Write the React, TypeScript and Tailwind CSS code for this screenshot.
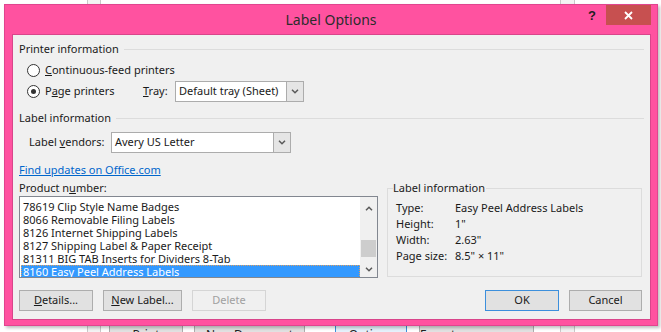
import React from "react";

const ui = "font-['Noto_Sans',sans-serif] text-[11px] text-[#1a1a1a]";

function Chevron({ up = false }: { up?: boolean }) {
  return (
    <svg width="8" height="5" viewBox="0 0 8 5" className="block">
      <path
        d={up ? "M1 4.2 L4 1.2 L7 4.2" : "M1 0.8 L4 3.8 L7 0.8"}
        fill="none"
        stroke="#5a5a5a"
        strokeWidth="1.5"
      />
    </svg>
  );
}

function Radio({ checked = false }: { checked?: boolean }) {
  return (
    <span className="w-[13px] h-[13px] rounded-full border border-[#333] bg-white flex items-center justify-center shrink-0">
      {checked && <span className="w-[5px] h-[5px] rounded-full bg-[#333]" />}
    </span>
  );
}

function Combo({ value, width }: { value: string; width: string }) {
  return (
    <div className={`flex h-[21px] border border-[#acacac] bg-white ${width}`}>
      <span className="flex-1 pl-[3px] flex items-center">{value}</span>
      <span className="w-[17px] bg-[#e5e5e5] border-l border-[#acacac] flex items-center justify-center">
        <Chevron />
      </span>
    </div>
  );
}

function Btn({ children, className = "" }: { children: React.ReactNode; className?: string }) {
  return (
    <div
      className={`h-[21px] flex items-center justify-center border ${className}`}
    >
      {children}
    </div>
  );
}

const products = [
  "78619 Clip Style Name Badges",
  "8066 Removable Filing Labels",
  "8126 Internet Shipping Labels",
  "8127 Shipping Label & Paper Receipt",
  "81311 BIG TAB Inserts for Dividers 8-Tab",
  "8160 Easy Peel Address Labels",
];

const info: [string, string][] = [
  ["Type:", "Easy Peel Address Labels"],
  ["Height:", "1\""],
  ["Width:", "2.63\""],
  ["Page size:", "8.5\" \u00d7 11\""],
];

export default function App() {
  return (
    <div className={`relative w-[661px] h-[332px] overflow-hidden bg-white ${ui}`}>
      {/* background window behind the dialog */}
      <div className="flex h-full">
        <div className="w-[87px]" />
        <div className="w-[14px] border-l border-r border-[#c9c9c9] bg-[#f3f3f3]" />
        <div className="flex-1 flex flex-col">
          <div className="mt-[325px] flex text-[12px] leading-[14px] font-['Noto_Sans',sans-serif] text-[#222]">
            <div className="ml-[8px] w-[74px] h-[22px] border border-[#adadad] bg-[#e1e1e1] flex justify-center pt-[2px]">Print</div>
            <div className="ml-[11px] w-[111px] h-[22px] border border-[#adadad] bg-[#e1e1e1] flex justify-center pt-[2px]">New Document</div>
            <div className="ml-[30px] w-[72px] h-[22px] border border-[#3c8fdc] bg-[#e5f1fb] flex justify-center pt-[2px]">Options</div>
            <div className="ml-[12px] w-[115px] h-[22px] border border-[#adadad] bg-[#e1e1e1] flex justify-center pt-[2px]">E-postage Properties</div>
          </div>
        </div>
        <div className="w-[15px] border-l border-r border-[#c9c9c9] bg-[#f3f3f3]" />
        <div className="w-[86px]" />
      </div>

      {/* Label Options dialog */}
      <div className="absolute left-[4px] top-[4px] w-[654px] h-[322px] bg-[#ff52a0] border border-[#e0458f] shadow-[2px_2px_3px_rgba(0,0,0,0.25)] flex flex-col">
        <div className="h-[29px] grid grid-cols-[1fr_auto_1fr]">
          <div />
          <div className="text-[14px] text-[#2c2c2c] pt-[4px] font-['Noto_Sans',sans-serif]">Label Options</div>
          <div className="flex justify-end items-start pr-[6px]">
            <span className="mt-[1px] mr-[10px] text-[13px] font-bold text-[#1e1e1e] font-['Liberation_Sans',sans-serif]">?</span>
            <span className="w-[45px] h-[20px] bg-[#c75050] flex items-center justify-center">
              <svg width="9" height="9" viewBox="0 0 9 9">
                <path d="M1 1 L8 8 M8 1 L1 8" stroke="#fff" strokeWidth="1.8" />
              </svg>
            </span>
          </div>
        </div>

        <div className="ml-[7px] mr-[6px] h-[286px] bg-[#f0f0f0] border border-[#d9458b] flex flex-col pt-[6px] px-[6px]">
          {/* Printer information */}
          <div className="h-[16px] flex items-center">
            <span>Printer information</span>
            <div className="flex-1 h-px bg-[#dcdcdc] ml-[5px]" />
          </div>
          <div className="mt-[5px] h-[16px] flex items-center ml-[8px]">
            <Radio />
            <span className="ml-[5px]">
              <u>C</u>ontinuous-feed printers
            </span>
          </div>
          <div className="mt-[3px] h-[21px] flex items-center ml-[8px]">
            <Radio checked />
            <span className="ml-[5px] w-[98px]">
              P<u>a</u>ge printers
            </span>
            <span className="w-[32px]">
              <u>T</u>ray:
            </span>
            <Combo value="Default tray (Sheet)" width="w-[129px]" />
          </div>

          {/* Label information */}
          <div className="mt-[8px] h-[16px] flex items-center">
            <span>Label information</span>
            <div className="flex-1 h-px bg-[#dcdcdc] ml-[5px]" />
          </div>
          <div className="mt-[6px] h-[21px] flex items-center ml-[10px]">
            <span className="w-[82px]">
              Label <u>v</u>endors:
            </span>
            <Combo value="Avery US Letter" width="w-[180px]" />
          </div>
          <div className="mt-[9px] h-[16px] flex items-center">
            <span className="text-[#0066cc] underline">Find updates on Office.com</span>
          </div>

          {/* product list + info box */}
          <div className="mt-[2px] flex">
            <div className="w-[359px] flex flex-col">
              <div className="h-[16px] flex items-center">
                Product n<u>u</u>mber:
              </div>
              <div className="h-[82px] border border-[#828790] bg-white flex overflow-hidden">
                <div className="flex-1 pt-[3px] pl-[1px] leading-[13px]">
                  {products.map((p, i) =>
                    i === products.length - 1 ? (
                      <div
                        key={p}
                        className="h-[13px] leading-[11px] flex items-center pl-[1px] bg-[#3399ff] text-white border border-dotted border-[#e0a060]"
                      >
                        {p}
                      </div>
                    ) : (
                      <div key={p} className="h-[13px] flex items-center pl-[2px]">
                        {p}
                      </div>
                    )
                  )}
                </div>
                <div className="w-[17px] bg-[#f0f0f0] flex flex-col">
                  <div className="h-[22px] flex items-center justify-center">
                    <Chevron up />
                  </div>
                  <div className="mt-[21px] mx-[1px] h-[17px] bg-[#cdcdcd]" />
                  <div className="flex-1" />
                  <div className="h-[16px] flex items-center justify-center">
                    <Chevron />
                  </div>
                </div>
              </div>
            </div>

            <fieldset className="ml-[9px] w-[255px] h-[97px] border border-[#dcdcdc] pl-[5px]">
              <legend className="h-[16px] pr-[1px]">Label information</legend>
              <div className="mt-[4px] ml-[3px] flex flex-col">
                {info.map(([k, v]) => (
                  <div key={k} className="h-[16px] flex items-center">
                    <span className="w-[59px]">{k}</span>
                    <span>{v}</span>
                  </div>
                ))}
              </div>
            </fieldset>
          </div>

          {/* buttons */}
          <div className="mt-[12px] flex mr-[2px]">
            <Btn className="w-[74px] bg-[#e1e1e1] border-[#adadad]">
              <span>
                <u>D</u>etails...
              </span>
            </Btn>
            <Btn className="ml-[10px] w-[79px] bg-[#e1e1e1] border-[#adadad]">
              <span>
                <u>N</u>ew Label...
              </span>
            </Btn>
            <Btn className="ml-[10px] w-[74px] bg-[#f0f0f0] border-[#d5d5d5] text-[#a0a0a0]">
              <span>Delete</span>
            </Btn>
            <div className="flex-1" />
            <Btn className="w-[74px] bg-[#e1e1e1] border-[#3c8fdc]">
              <span>OK</span>
            </Btn>
            <Btn className="ml-[10px] w-[73px] bg-[#e1e1e1] border-[#adadad]">
              <span>Cancel</span>
            </Btn>
          </div>
        </div>
      </div>
    </div>
  );
}
